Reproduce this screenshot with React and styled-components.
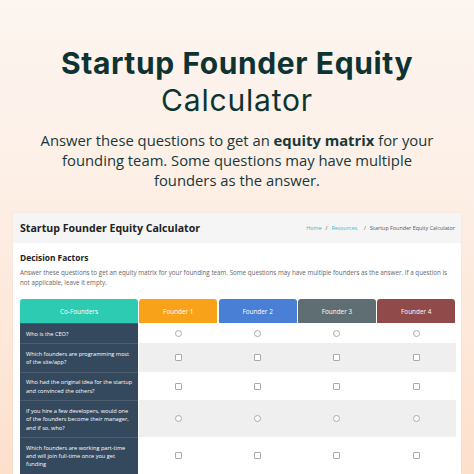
import React from 'react';
import styled, { createGlobalStyle } from 'styled-components';

const Global = createGlobalStyle`
  html, body { margin: 0; padding: 0; }
  body {
    width: 474px;
    height: 474px;
    overflow: hidden;
    background: linear-gradient(180deg, #fcf5f0 0%, #fdeee4 45%, #fde0cc 100%);
    font-family: "Open Sans", sans-serif;
  }
`;

const Page = styled.div`
  width: 474px;
  height: 474px;
  overflow: hidden;
  display: flex;
  flex-direction: column;
  align-items: center;
`;

const Hero = styled.header`
  padding-top: 45px;
  text-align: center;
  color: #0d3432;
  display: flex;
  flex-direction: column;
  align-items: center;
`;

const Title = styled.h1`
  margin: 0;
  font-family: "Inter", sans-serif;
  font-weight: 700;
  font-size: 30px;
  line-height: 37px;
  letter-spacing: 0.6px;
`;

const Sub = styled.span`
  display: block;
  font-weight: 400;
  letter-spacing: 0.8px;
`;

const Lead = styled.p`
  margin: 11px 0 0;
  width: 410px;
  font-size: 14.8px;
  line-height: 20px;
  color: #17393a;
  b { font-weight: 700; }
`;

const Card = styled.section`
  margin-top: 23px;
  width: 448px;
  background: #fff;
  box-shadow: 0 0 2px rgba(0, 0, 0, 0.06);
  flex: 1;
`;

const CardHead = styled.div`
  height: 30px;
  display: flex;
  align-items: center;
  justify-content: space-between;
  padding: 0 6px 0 7px;
  background: #f5f5f5;
`;

const CardTitle = styled.h2`
  margin: 0;
  font-size: 10.6px;
  font-weight: 700;
  color: #222;
`;

const Crumbs = styled.nav`
  font-size: 5.4px;
  color: #555;
  display: flex;
  gap: 4px;
  a { color: #3fb7c4; text-decoration: none; }
`;

const Body = styled.div`
  padding: 9px 7px 0;
`;

const Section = styled.h3`
  margin: 0;
  font-size: 8.4px;
  font-weight: 700;
  color: #222;
`;

const Note = styled.p`
  margin: 5px 0 0;
  font-size: 6.25px;
  line-height: 10px;
  color: #666;
`;

const Grid = styled.div`
  margin-top: 11px;
  display: grid;
  grid-template-columns: 118px repeat(4, 78px);
  column-gap: 1.3px;
`;

const HeadCell = styled.div`
  height: 24px;
  display: flex;
  align-items: center;
  justify-content: center;
  background: ${p => p.bg};
  color: #fff;
  font-size: 6.4px;
  border-radius: 3px 3px 0 0;
`;

const Question = styled.div`
  background: #34495e;
  color: #fff;
  font-size: 5.6px;
  line-height: 8.3px;
  padding: 5.5px 4px 5.5px 6px;
  border-top: 1px solid #4b5d6f;
`;

const Answer = styled.div`
  display: flex;
  align-items: center;
  justify-content: center;
  background: ${p => (p.shade ? '#efefef' : '#fff')};
  margin: 0 -0.7px;
`;

const Radio = styled.span`
  width: 5px;
  height: 5px;
  border-radius: 50%;
  border: 1px solid #aaa;
  background: #fff;
`;

const Check = styled.span`
  width: 5px;
  height: 5px;
  border-radius: 1px;
  border: 1px solid #aaa;
  background: #fff;
`;

const heads = [
  ['Founder 1', '#f8a21a'],
  ['Founder 2', '#4a7fd6'],
  ['Founder 3', '#5f6e73'],
  ['Founder 4', '#8f4a49'],
];

const questions = [
  ['Who is the CEO?', 'radio'],
  ['Which founders are programming most of the site/app?', 'check'],
  ['Who had the original idea for the startup and convinced the others?', 'check'],
  ['If you hire a few developers, would one of the founders become their manager, and if so, who?', 'radio'],
  ['Which founders are working part-time and will join full-time once you get funding', 'check'],
];

export default function App() {
  return (
    <Page>
      <Global />
      <Hero>
        <Title>
          Startup Founder Equity
          <Sub>Calculator</Sub>
        </Title>
        <Lead>
          Answer these questions to get an <b>equity matrix</b> for your founding team. Some questions may have multiple founders as the answer.
        </Lead>
      </Hero>
      <Card>
        <CardHead>
          <CardTitle>Startup Founder Equity Calculator</CardTitle>
          <Crumbs>
            <a href="#">Home</a>
            <span>/</span>
            <a href="#">Resources</a>
            <span>&nbsp;&nbsp;/</span>
            <span>Startup Founder Equity Calculator</span>
          </Crumbs>
        </CardHead>
        <Body>
          <Section>Decision Factors</Section>
          <Note>
            Answer these questions to get an equity matrix for your founding team. Some questions may have multiple founders as the answer. If a question is not applicable, leave it empty.
          </Note>
          <Grid>
            <HeadCell bg="#2dcbb1">Co-Founders</HeadCell>
            {heads.map(([name, bg]) => (
              <HeadCell key={name} bg={bg}>{name}</HeadCell>
            ))}
            {questions.map(([q, kind], i) => (
              <React.Fragment key={q}>
                <Question>{q}</Question>
                {heads.map(([name]) => (
                  <Answer key={name} shade={i % 2 === 1}>
                    {kind === 'radio' ? <Radio /> : <Check />}
                  </Answer>
                ))}
              </React.Fragment>
            ))}
          </Grid>
        </Body>
      </Card>
    </Page>
  );
}
